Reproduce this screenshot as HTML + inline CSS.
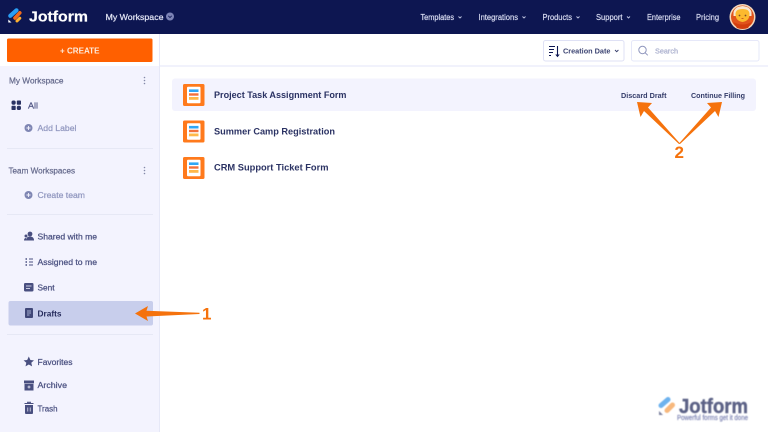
<!DOCTYPE html>
<html><head><meta charset="utf-8"><style>
html,body{margin:0;padding:0;width:768px;height:432px;overflow:hidden;background:#fff}
svg{display:block}
text{font-family:"Liberation Sans",sans-serif}
.b{font-weight:bold}
.m{stroke-width:.22;paint-order:stroke}
</style></head><body>
<svg width="768" height="432" viewBox="0 0 768 432" xmlns="http://www.w3.org/2000/svg">
<defs>
<filter id="all" filterUnits="userSpaceOnUse" x="0" y="0" width="768" height="432"><feGaussianBlur stdDeviation="0.3"/></filter>
<filter id="wm" x="-10%" y="-20%" width="120%" height="140%"><feGaussianBlur stdDeviation="0.55"/></filter>
<g id="fi">
<rect x="0" y="0" width="21.500" height="22" rx="1.500" fill="#ff7a1c"/>
<rect x="4" y="2.800" width="13.500" height="16.400" rx="1" fill="#fff"/>
<rect x="6" y="5.400" width="9.500" height="2.600" fill="#2da6f5"/>
<rect x="6" y="9.300" width="9.500" height="2.400" fill="#f2703a"/>
<rect x="6" y="13" width="9.500" height="2.800" fill="#ffb84a"/>
</g>
</defs>
<g filter="url(#all)">
<rect x="0" y="0" width="768" height="432" fill="#fff"/>
<rect x="0" y="66" width="159" height="366" fill="#f3f3fe"/>
<rect x="159" y="34" width="1" height="398" fill="#e6e8f7"/>
<rect x="160" y="65" width="608" height="2" fill="#f1f2fc"/>
<rect x="0" y="0" width="768" height="34" fill="#0a1551"/>

<!-- Logo -->
<path d="M10.300 15.800 L16.500 10.300" stroke="#2b9ef5" stroke-width="4.200" stroke-linecap="round" fill="none"/>
<path d="M15 18 L19.800 12.800" stroke="#f26a1b" stroke-width="3.600" stroke-linecap="round" fill="none"/>
<path d="M17 21 L19.800 18.200" stroke="#ffb02e" stroke-width="3" stroke-linecap="round" fill="none"/>
<path d="M8.300 19.500 L8.300 22.500 L11.500 22.500Z" fill="#fff"/>
<text x="29" y="21.500" class="b" font-size="14.500" fill="#fff" stroke="#fff" stroke-width=".2" textLength="59" lengthAdjust="spacingAndGlyphs">Jotform</text>
<text x="105.500" y="20" class="m" font-size="8.500" fill="#e3e5f5" stroke="#e3e5f5" textLength="58" lengthAdjust="spacingAndGlyphs">My Workspace</text>
<circle cx="170" cy="16.500" r="4" fill="#7c83b5"/>
<path d="M168.300 15.800 L170 17.500 L171.700 15.800" fill="none" stroke="#0a1551" stroke-width=".8"/>

<!-- Nav -->
<g font-size="8" fill="#d5d8ee" stroke="#d5d8ee" class="m">
<text x="420.500" y="20" textLength="33.500" lengthAdjust="spacingAndGlyphs">Templates</text>
<text x="478.500" y="20" textLength="39.500" lengthAdjust="spacingAndGlyphs">Integrations</text>
<text x="542.500" y="20" textLength="29.500" lengthAdjust="spacingAndGlyphs">Products</text>
<text x="596" y="20" textLength="26.500" lengthAdjust="spacingAndGlyphs">Support</text>
<text x="647" y="20" textLength="33.500" lengthAdjust="spacingAndGlyphs">Enterprise</text>
<text x="696" y="20" textLength="23" lengthAdjust="spacingAndGlyphs">Pricing</text>
</g>
<g fill="none" stroke="#c5c9e4" stroke-width=".9">
<path d="M458.500 16.500 L460 18 L461.500 16.500"/>
<path d="M522.500 16.500 L524 18 L525.500 16.500"/>
<path d="M576.500 16.500 L578 18 L579.500 16.500"/>
<path d="M627 16.500 L628.500 18 L630 16.500"/>
</g>

<!-- Avatar -->
<circle cx="742.500" cy="17" r="13" fill="#f3d9bd"/>
<circle cx="742.500" cy="17" r="11.500" fill="#e0521a"/>
<path d="M733.500 12 Q735 6.500 742.500 6 Q750 6.500 751.500 12 L751.500 16 L733.500 16Z" fill="#f8e6d0"/>
<path d="M735.500 14 Q735.500 9 742.500 9 Q749.500 9 749.500 14 Q749.500 21 742.500 22 Q735.500 21 735.500 14Z" fill="#fcb92f"/>
<path d="M733 22 Q742.500 27 752 22 L748 28 Q742.500 30 737 28Z" fill="#d23c10"/>
<circle cx="739.500" cy="15.500" r=".9" fill="#7a4a2a"/>
<circle cx="745.500" cy="15.500" r=".9" fill="#7a4a2a"/>
<path d="M741.500 18.500 L743.500 18.500" stroke="#c9541e" stroke-width=".9"/>

<!-- Create -->
<rect x="7" y="38.500" width="145.500" height="23.500" rx="1.500" fill="#ff6100"/>
<text x="60" y="53.500" class="b" font-size="8.500" fill="#fde9d9" textLength="39.500" lengthAdjust="spacingAndGlyphs">+ CREATE</text>

<!-- Sort + Search -->
<rect x="543.500" y="40.500" width="80.500" height="20.500" rx="2" fill="#fff" stroke="#dfe1f5"/>
<g stroke="#0a1551" stroke-width="1" fill="none">
<path d="M549 46.500 H555 M549 49.500 H554 M549 52.500 H553 M549 55.500 H551"/>
<path d="M557.500 46 V55.500" stroke-width="1.100"/>
</g>
<path d="M555.300 54.500 H559.700 L557.500 57.300Z" fill="#0a1551"/>
<text x="563" y="53.500" class="b" font-size="7.500" fill="#3d4573" textLength="47.500" lengthAdjust="spacingAndGlyphs">Creation Date</text>
<path d="M615 50 L616.700 51.700 L618.400 50" fill="none" stroke="#343c6a" stroke-width=".9"/>
<rect x="631.500" y="40.500" width="127.500" height="20.500" rx="2" fill="#fff" stroke="#e6e8f9"/>
<circle cx="642.500" cy="50" r="3.700" fill="none" stroke="#8f96bd" stroke-width="1"/>
<path d="M645.200 52.800 L647.800 55.300" stroke="#8f96bd" stroke-width="1"/>
<text x="655" y="53.500" class="m" font-size="7.500" fill="#a9aecd" stroke="#a9aecd" textLength="23" lengthAdjust="spacingAndGlyphs">Search</text>

<!-- Sidebar text -->
<text x="9" y="83.500" class="m" font-size="8" fill="#666b8d" stroke="#666b8d" textLength="54.500" lengthAdjust="spacingAndGlyphs">My Workspace</text>
<g fill="#8489a9"><circle cx="144.500" cy="77.500" r=".8"/><circle cx="144.500" cy="80.500" r=".8"/><circle cx="144.500" cy="83.500" r=".8"/></g>
<g fill="#2b3263"><rect x="11.500" y="100.500" width="4.200" height="4.200" rx="1.800"/><rect x="16.800" y="100.500" width="4.200" height="4.200" rx=".8"/><rect x="11.500" y="105.800" width="4.200" height="4.200" rx=".8"/><rect x="16.800" y="105.800" width="4.200" height="4.200" rx="1.800"/></g>
<text x="28" y="108.500" class="m" font-size="8.200" fill="#4a5080" stroke="#4a5080" textLength="10" lengthAdjust="spacingAndGlyphs">All</text>
<circle cx="28.500" cy="128" r="4" fill="#7f86b3"/>
<path d="M26.500 128 H30.500 M28.500 126 V130" stroke="#f3f3fe" stroke-width=".9"/>
<text x="37.500" y="131" class="m" font-size="8.200" fill="#9298c0" stroke="#9298c0" textLength="39" lengthAdjust="spacingAndGlyphs">Add Label</text>
<rect x="7" y="148" width="146" height="1" fill="#e6e8f5"/>

<text x="8.500" y="173.500" class="m" font-size="8" fill="#666b8d" stroke="#666b8d" textLength="66.500" lengthAdjust="spacingAndGlyphs">Team Workspaces</text>
<g fill="#8489a9"><circle cx="144.500" cy="167.500" r=".8"/><circle cx="144.500" cy="170.500" r=".8"/><circle cx="144.500" cy="173.500" r=".8"/></g>
<circle cx="28.500" cy="195" r="4" fill="#7f86b3"/>
<path d="M26.500 195 H30.500 M28.500 193 V197" stroke="#f3f3fe" stroke-width=".9"/>
<text x="37.500" y="198" class="m" font-size="8.200" fill="#9298c0" stroke="#9298c0" textLength="47.500" lengthAdjust="spacingAndGlyphs">Create team</text>
<rect x="7" y="214" width="146" height="1" fill="#e6e8f5"/>

<!-- Shared -->
<g fill="#4a5080"><circle cx="30" cy="234" r="2.400"/><path d="M26 240.500 Q26 236.500 30 236.500 Q34 236.500 34 240.500Z"/><circle cx="26" cy="236" r="1.500"/><path d="M24 240.500 Q24 238 26 238 L26 240.500Z"/></g>
<text x="37.500" y="239.500" class="m" font-size="8.200" fill="#4a5080" stroke="#4a5080" textLength="59.500" lengthAdjust="spacingAndGlyphs">Shared with me</text>
<!-- Assigned -->
<g stroke="#4a5080" stroke-width=".9" fill="none"><path d="M29 259 H33 M29 262 H33 M29 265 H33"/><path d="M25.500 259 H27 M25.500 262 H27 M25.500 265 H27" stroke-width="1.400"/></g>
<text x="37.500" y="265" class="m" font-size="8.200" fill="#4a5080" stroke="#4a5080" textLength="59.500" lengthAdjust="spacingAndGlyphs">Assigned to me</text>
<!-- Sent -->
<rect x="24" y="283" width="9.500" height="8.500" rx="1.200" fill="#4a5080"/>
<path d="M26 286 H31.500 M26 288.500 H30" stroke="#f3f3fe" stroke-width=".8"/>
<text x="37.500" y="290.500" class="m" font-size="8.200" fill="#4a5080" stroke="#4a5080" textLength="17" lengthAdjust="spacingAndGlyphs">Sent</text>
<!-- Drafts -->
<rect x="8.500" y="301" width="144.500" height="24.500" rx="2" fill="#c8ceec"/>
<rect x="25" y="308" width="8" height="10" rx="1" fill="#3f4678"/>
<path d="M27 311 H31 M27 313 H31 M27 315 H29.500" stroke="#c8ceec" stroke-width=".7"/>
<text x="37.500" y="316.500" class="b" font-size="8.200" fill="#252c5c" textLength="24" lengthAdjust="spacingAndGlyphs">Drafts</text>
<rect x="7" y="334" width="146" height="1" fill="#e6e8f5"/>
<!-- Favorites -->
<path d="M28.800 356.500 L30.400 360 L34 360.400 L31.300 362.800 L32.100 366.400 L28.800 364.500 L25.500 366.400 L26.300 362.800 L23.600 360.400 L27.200 360Z" fill="#4a5080"/>
<text x="37.500" y="365" class="m" font-size="8.200" fill="#4a5080" stroke="#4a5080" textLength="35" lengthAdjust="spacingAndGlyphs">Favorites</text>
<!-- Archive -->
<rect x="24" y="380.500" width="10" height="2.800" fill="#4a5080"/>
<rect x="24.500" y="383.800" width="9" height="6.700" fill="#4a5080"/>
<path d="M27.500 387 H30.500 M29 385.500 V388.500" stroke="#f3f3fe" stroke-width=".8"/>
<text x="37.500" y="388" class="m" font-size="8.200" fill="#4a5080" stroke="#4a5080" textLength="29.500" lengthAdjust="spacingAndGlyphs">Archive</text>
<!-- Trash -->
<path d="M25 405 H33 V413 Q33 414 32 414 H26 Q25 414 25 413Z" fill="#4a5080"/>
<path d="M24.500 403.500 H33.500 M27 402.300 H31" stroke="#4a5080" stroke-width="1.100"/>
<path d="M27.800 407.500 V411.500 M30.200 407.500 V411.500" stroke="#f3f3fe" stroke-width=".7"/>
<text x="37.500" y="411.500" class="m" font-size="8.200" fill="#4a5080" stroke="#4a5080" textLength="20" lengthAdjust="spacingAndGlyphs">Trash</text>

<!-- List -->
<rect x="172" y="78.500" width="584" height="32.500" rx="3" fill="#f3f3fe"/>
<use href="#fi" x="183" y="84"/>
<use href="#fi" x="183" y="120.500"/>
<use href="#fi" x="183" y="157"/>
<g class="b" font-size="9.300" fill="#2b3263">
<text x="214" y="98" textLength="132.500" lengthAdjust="spacingAndGlyphs">Project Task Assignment Form</text>
<text x="214" y="134.500" textLength="121" lengthAdjust="spacingAndGlyphs">Summer Camp Registration</text>
<text x="214" y="170.500" textLength="114.500" lengthAdjust="spacingAndGlyphs">CRM Support Ticket Form</text>
</g>
<g class="b" font-size="7.700" fill="#343c6a">
<text x="621" y="98" textLength="45.500" lengthAdjust="spacingAndGlyphs">Discard Draft</text>
<text x="691" y="98" textLength="54" lengthAdjust="spacingAndGlyphs">Continue Filling</text>
</g>

<!-- Arrows -->
<path d="M135 313.500 L148 306 L146.500 310.800 L199.500 312.800 L199.500 314 L146.500 316.500 L148 321Z" fill="#f57208"/>
<text x="202" y="319.500" class="b" font-size="17" fill="#f57208" stroke="#fff" stroke-width=".8" style="paint-order:stroke">1</text>
<path d="M637 102 L652 103 L648 107.500 L680 143.500 L679 144 L644 111 L640.500 117Z" fill="#f57208"/>
<path d="M722 102 L707 103 L711 107.500 L679 143.500 L680 144 L715 111 L718.500 117Z" fill="#f57208"/>
<text x="674.500" y="158" class="b" font-size="17" fill="#f57208" stroke="#fff" stroke-width=".8" style="paint-order:stroke">2</text>

<!-- Watermark -->
<g filter="url(#wm)">
<path d="M661 405.500 L668 399.500" stroke="#6db2ee" stroke-width="5" stroke-linecap="round"/>
<path d="M667 410.500 L672.500 405" stroke="#f7b87d" stroke-width="5" stroke-linecap="round"/>
<path d="M659 411 L659 415 L663 415Z" fill="#7b819f"/>
<text x="679" y="413" class="b" font-size="20" fill="#5c6286" stroke="#5c6286" stroke-width=".4" textLength="69" lengthAdjust="spacingAndGlyphs">Jotform</text>
<text x="677" y="420" class="m" font-size="7.500" fill="#8087b5" stroke="#8087b5" textLength="71" lengthAdjust="spacingAndGlyphs">Powerful forms get it done</text>
</g>
</g>
</svg>
</body></html>
